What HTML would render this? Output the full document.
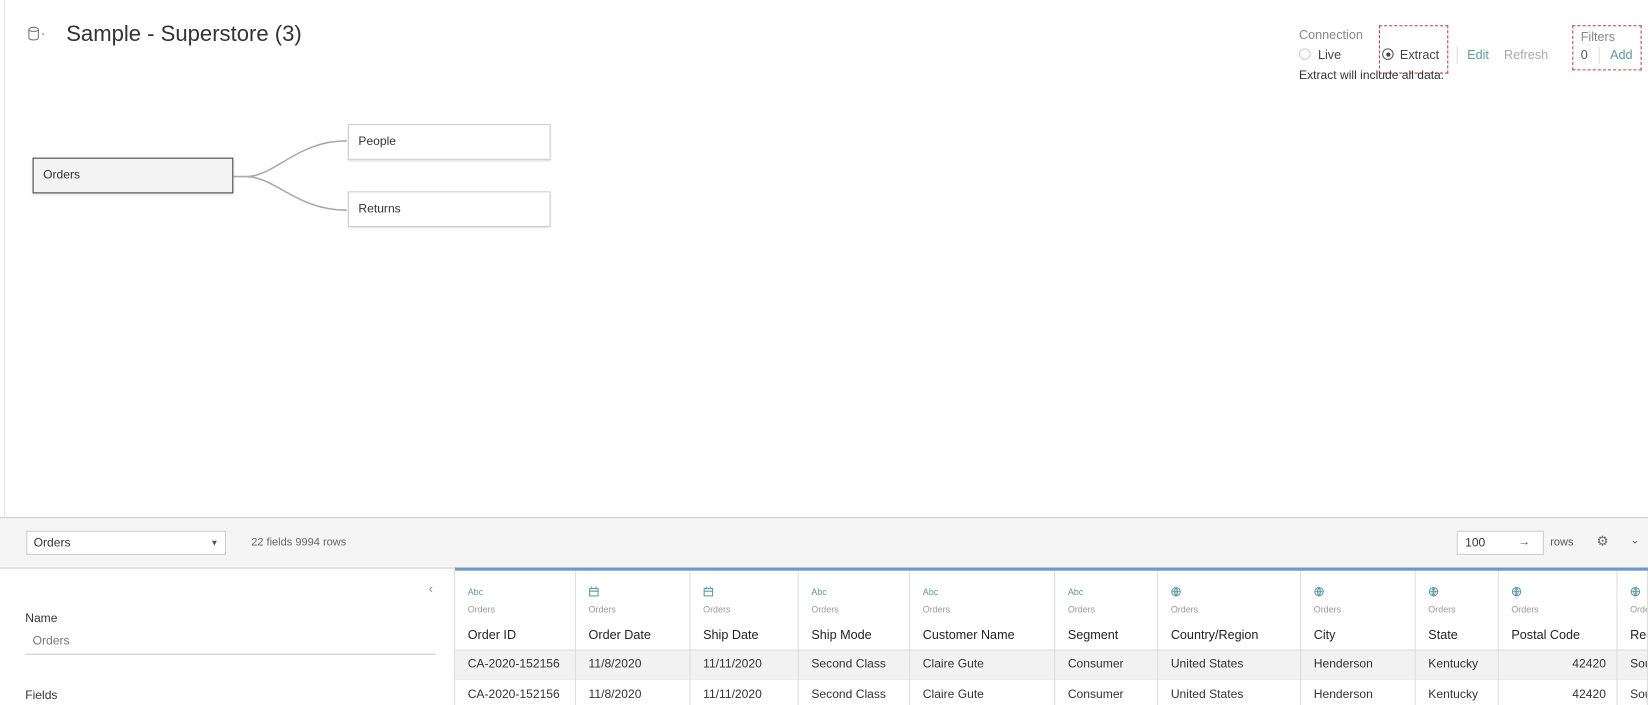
<!DOCTYPE html>
<html style="overflow:hidden"><head><style>
*{box-sizing:border-box;margin:0;padding:0}
body{width:1648px;height:705px;overflow:hidden;background:#fff;font-family:"Liberation Sans",sans-serif;color:#333;position:relative}
#w{position:absolute;left:0;top:0;width:1568px;height:671px;overflow:hidden;transform:scale(1.051);transform-origin:0 0}
.a{position:absolute}
.box{position:absolute;background:#fff;border:1px solid #ccc;box-shadow:0 1px 2px rgba(0,0,0,.15);font-size:11.5px;padding-left:9px;display:flex;align-items:center}
.col{position:absolute;top:540px;height:131px;border-right:1px solid #ddd;overflow:hidden}
.hd{position:absolute;top:3px;left:0;height:76px;width:100%}
.t{position:absolute;left:12px;font-size:8.5px;color:#5a9aa0;top:15px}
.o{position:absolute;left:12px;font-size:8.5px;color:#999;top:32px}
.n{position:absolute;left:12px;font-size:12px;color:#222;top:54px;white-space:nowrap}
.c{position:absolute;left:12px;font-size:11.5px;color:#333;white-space:nowrap}
</style></head><body><div id="w">
<div class="a" style="left:4px;top:0;width:1px;height:493px;background:#e4e4e4"></div>
<svg class="a" style="left:26px;top:25px" width="20" height="14"><ellipse cx="6" cy="3" rx="4.5" ry="2" fill="none" stroke="#777"/><path d="M1.5 3v8c0 1.2 2 2 4.5 2s4.5-.8 4.5-2V3" fill="none" stroke="#777"/><rect x="14" y="7" width="2" height="1" fill="#777"/></svg>
<div class="a" style="left:63px;top:21px;font-size:21px;color:#333">Sample - Superstore (3)</div>
<svg class="a" style="left:222px;top:130px" width="112" height="75"><path d="M0 38h12C40 38 60 4 108 4M12 38C40 38 60 70 108 70" fill="none" stroke="#aaa" stroke-width="1.5"/></svg>
<div class="box" style="left:31px;top:150px;width:191px;height:34px;background:#f3f3f3;border-color:#444">Orders</div>
<div class="box" style="left:331px;top:118px;width:193px;height:34px">People</div>
<div class="box" style="left:331px;top:182px;width:193px;height:34px">Returns</div>
<div class="a" style="left:1236px;top:26px;font-size:12px;color:#888">Connection</div>
<div class="a" style="left:1236px;top:46px;width:11px;height:11px;border:1px solid #ccc;border-radius:50%"></div>
<div class="a" style="left:1254px;top:45px;font-size:12px;color:#444">Live</div>
<div class="a" style="left:1312px;top:24px;width:66px;height:46px;border:1px dashed #c04040"></div>
<div class="a" style="left:1315px;top:46px;width:11px;height:11px;border:1px solid #555;border-radius:50%"><div style="margin:2.5px;width:4px;height:4px;border-radius:50%;background:#444"></div></div>
<div class="a" style="left:1332px;top:45px;font-size:12px;color:#444">Extract</div>
<div class="a" style="left:1386px;top:44px;width:1px;height:17px;background:#ddd"></div>
<div class="a" style="left:1396px;top:45px;font-size:12px;color:#5a9aa0">Edit</div>
<div class="a" style="left:1431px;top:45px;font-size:12px;color:#aaa">Refresh</div>
<div class="a" style="left:1236px;top:66px;font-size:11.5px;color:#333">Extract will include all data.</div>
<div class="a" style="left:1496px;top:24px;width:66px;height:43px;border:1px dashed #c04040"></div>
<div class="a" style="left:1504px;top:28px;font-size:12px;color:#888">Filters</div>
<div class="a" style="left:1504px;top:45px;font-size:12px;color:#555">0</div>
<div class="a" style="left:1521px;top:44px;width:1px;height:17px;background:#ddd"></div>
<div class="a" style="left:1532px;top:45px;font-size:12px;color:#5a9aa0">Add</div>
<div class="a" style="left:0;top:492px;width:1568px;height:49px;background:#f5f5f5;border-top:1px solid #ccc;border-bottom:1px solid #ccc"></div>
<div class="a" style="left:25px;top:505px;width:190px;height:23px;background:#fff;border:1px solid #ccc;font-size:11.5px;padding:5px 0 0 6px">Orders<span style="position:absolute;right:6px;top:6px;font-size:8px;color:#555">▼</span></div>
<div class="a" style="left:239px;top:510px;font-size:10.5px;color:#666">22 fields 9994 rows</div>
<div class="a" style="left:1386px;top:505px;width:83px;height:23px;background:#fff;border:1px solid #ccc;font-size:11.5px;padding:5px 0 0 7px">100<span style="position:absolute;right:12px;top:4px;color:#555">→</span></div>
<div class="a" style="left:1475px;top:510px;font-size:10.5px;color:#555">rows</div>
<div class="a" style="left:1519px;top:507px;font-size:13px;color:#666">⚙</div>
<div class="a" style="left:1551px;top:507px;font-size:11px;color:#666">⌄</div>
<div class="a" style="left:408px;top:553px;font-size:12px;color:#888">‹</div>
<div class="a" style="left:24px;top:583px;font-size:11.5px;color:#333">Name</div>
<div class="a" style="left:31px;top:604px;font-size:11.5px;color:#777">Orders</div>
<div class="a" style="left:24px;top:622px;width:391px;height:1px;background:#ccc"></div>
<div class="a" style="left:24px;top:656px;font-size:11.5px;color:#333">Fields</div>
<div class="a" style="left:433px;top:618px;width:1135px;height:29px;background:#f2f2f2;border-top:1px solid #ddd;border-bottom:1px solid #eee"></div>
<div class="a" style="left:432px;top:540px;width:1px;height:131px;background:#ddd"></div>
<div id="cols"></div>
<div class="a" style="left:433px;top:540px;width:1135px;height:3px;background:#6c9ac0"></div>
</div>
<script>
var cols=[[433,548,'Abc','Order ID','CA-2020-152156'],[548,657,'cal','Order Date','11/8/2020'],[657,760,'cal','Ship Date','11/11/2020'],[760,866,'Abc','Ship Mode','Second Class'],[866,1004,'Abc','Customer Name','Claire Gute'],[1004,1102,'Abc','Segment','Consumer'],[1102,1238,'g','Country/Region','United States'],[1238,1347,'g','City','Henderson'],[1347,1426,'g','State','Kentucky'],[1426,1539,'g','Postal Code','42420'],[1539,1568,'g','Region','South']];
var h='';
cols.forEach(function(c){
 var w=c[1]-c[0];
 var ic=c[2]=='Abc'?'Abc':(c[2]=='cal'?'<svg width="10" height="10"><rect x="1" y="2" width="8" height="7" fill="none" stroke="#5a9aa0"/><path d="M1 4.5h8M3 0v2M7 0v2" stroke="#5a9aa0"/></svg>':'<svg width="10" height="10"><circle cx="5" cy="5" r="4" fill="none" stroke="#5a9aa0"/><path d="M1 5h8M5 1v8M5 1c-2 2-2 6 0 8M5 1c2 2 2 6 0 8" fill="none" stroke="#5a9aa0" stroke-width=".8"/></svg>');
 var num=c[3]=='Postal Code';
 var ds=num?'left:auto;right:10px':'';
 h+='<div class="col" style="left:'+c[0]+'px;width:'+w+'px"><div class="hd"><div class="t">'+ic+'</div><div class="o">Orders</div><div class="n">'+c[3]+'</div></div><div class="c" style="top:86px;'+ds+'">'+c[4]+'</div><div class="c" style="top:115px;'+ds+'">'+c[4]+'</div></div>';
});
document.getElementById('cols').innerHTML=h;
</script>
</body></html>
